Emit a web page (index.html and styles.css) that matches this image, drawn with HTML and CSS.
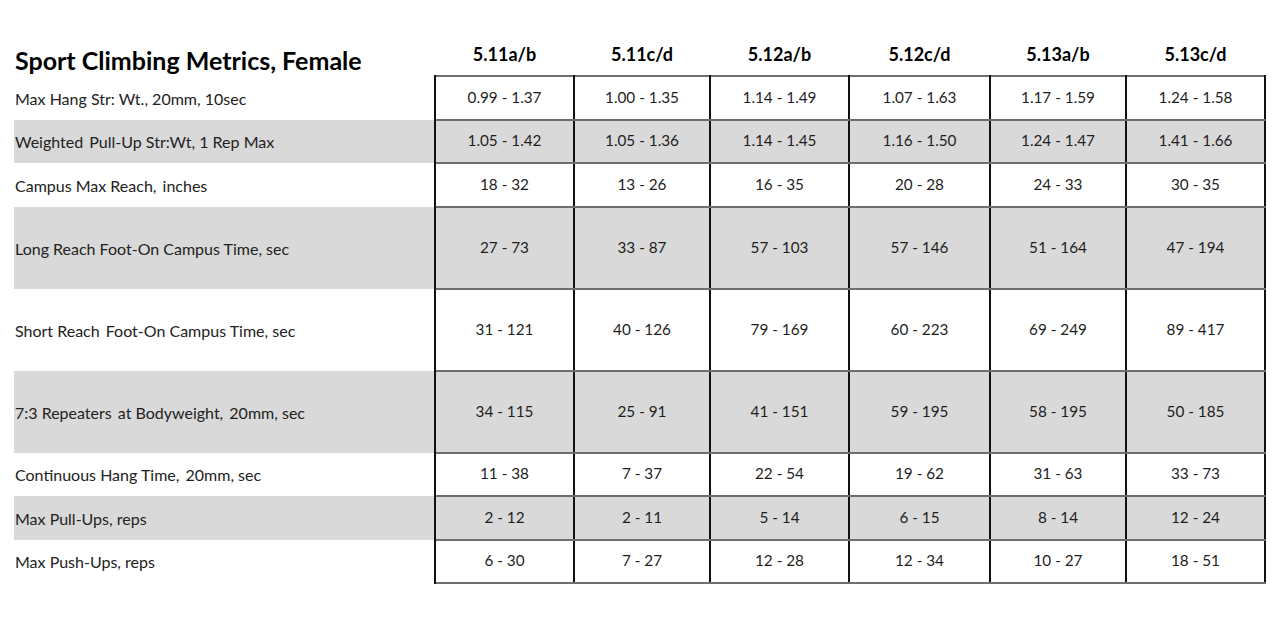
FILE: index.html
```html
<!DOCTYPE html>
<html>
<head>
<meta charset="utf-8">
<link rel="stylesheet" href="styles.css">
</head>
<body>
<table class="metrics">
  <colgroup>
    <col class="c-label">
    <col class="c1"><col class="c2"><col class="c3"><col class="c4"><col class="c5"><col class="c6">
  </colgroup>
  <thead>
    <tr class="head">
      <th class="title">Sport Climbing Metrics, Female</th>
      <th class="grade">5.11a/b</th>
      <th class="grade">5.11c/d</th>
      <th class="grade">5.12a/b</th>
      <th class="grade">5.12c/d</th>
      <th class="grade">5.13a/b</th>
      <th class="grade">5.13c/d</th>
    </tr>
  </thead>
  <tbody>
    <tr class="short">
      <td class="label">Max Hang Str: Wt., 20mm, 10sec</td>
      <td>0.99 - 1.37</td><td>1.00 - 1.35</td><td>1.14 - 1.49</td><td>1.07 - 1.63</td><td>1.17 - 1.59</td><td>1.24 - 1.58</td>
    </tr>
    <tr class="short alt">
      <td class="label">Weighted&thinsp; Pull-Up Str:Wt, 1 Rep Max</td>
      <td>1.05 - 1.42</td><td>1.05 - 1.36</td><td>1.14 - 1.45</td><td>1.16 - 1.50</td><td>1.24 - 1.47</td><td>1.41 - 1.66</td>
    </tr>
    <tr class="short">
      <td class="label">Campus Max Reach,&thinsp; inches</td>
      <td>18 - 32</td><td>13 - 26</td><td>16 - 35</td><td>20 - 28</td><td>24 - 33</td><td>30 - 35</td>
    </tr>
    <tr class="tall alt">
      <td class="label">Long Reach Foot-On Campus Time, sec</td>
      <td>27 - 73</td><td>33 - 87</td><td>57 - 103</td><td>57 - 146</td><td>51 - 164</td><td>47 - 194</td>
    </tr>
    <tr class="tall">
      <td class="label">Short Reach&thinsp; Foot-On Campus Time, sec</td>
      <td>31 - 121</td><td>40 - 126</td><td>79 - 169</td><td>60 - 223</td><td>69 - 249</td><td>89 - 417</td>
    </tr>
    <tr class="tall alt">
      <td class="label">7:3 Repeaters&thinsp; at Bodyweight,&thinsp; 20mm, sec</td>
      <td>34 - 115</td><td>25 - 91</td><td>41 - 151</td><td>59 - 195</td><td>58 - 195</td><td>50 - 185</td>
    </tr>
    <tr class="short">
      <td class="label">Continuous Hang Time,&thinsp; 20mm, sec</td>
      <td>11 - 38</td><td>7 - 37</td><td>22 - 54</td><td>19 - 62</td><td>31 - 63</td><td>33 - 73</td>
    </tr>
    <tr class="short alt">
      <td class="label">Max Pull-Ups, reps</td>
      <td>2 - 12</td><td>2 - 11</td><td>5 - 14</td><td>6 - 15</td><td>8 - 14</td><td>12 - 24</td>
    </tr>
    <tr class="short">
      <td class="label">Max Push-Ups, reps</td>
      <td>6 - 30</td><td>7 - 27</td><td>12 - 28</td><td>12 - 34</td><td>10 - 27</td><td>18 - 51</td>
    </tr>
  </tbody>
</table>
</body>
</html>
```

FILE: styles.css
```css
html, body {
  margin: 0;
  padding: 0;
  background: #ffffff;
}

body {
  font-family: Lato, "Open Sans", sans-serif;
  color: #1e1e1e;
}

.metrics {
  margin-left: 14px;
  border-collapse: collapse;
  table-layout: fixed;
  width: 1251px;
}

.c-label { width: 421px; }
.c1 { width: 139px; }
.c2 { width: 136px; }
.c3 { width: 139px; }
.c4 { width: 141px; }
.c5 { width: 136px; }
.c6 { width: 139px; }

.head {
  height: 76px;
}

.head th {
  padding: 0;
  vertical-align: bottom;
  border: none;
}

.title {
  text-align: left;
  font-size: 25px;
  font-weight: 700;
  color: #000;
  padding: 0 0 1px 1px !important;
  white-space: nowrap;
}

.grade {
  text-align: center;
  font-size: 18px;
  font-weight: 700;
  color: #000;
  padding-bottom: 10px !important;
}

tbody td {
  font-size: 15.3px;
  text-align: center;
  vertical-align: middle;
  padding: 0 0 2px 0;
  border-top: 2px solid #6e6e6e;
  border-bottom: 2px solid #6e6e6e;
  border-left: 2px solid #111;
  border-right: 2px solid #111;
  white-space: nowrap;
}

tbody td.label {
  text-align: left;
  font-size: 16px;
  padding: 1px 0 0 1px;
  border-top: none;
  border-bottom: none;
  border-left: none;
  color: #222;
}

.short { height: 43.5px; }
.tall { height: 82px; }

.alt td {
  background: #d9d9d9;
}
```
